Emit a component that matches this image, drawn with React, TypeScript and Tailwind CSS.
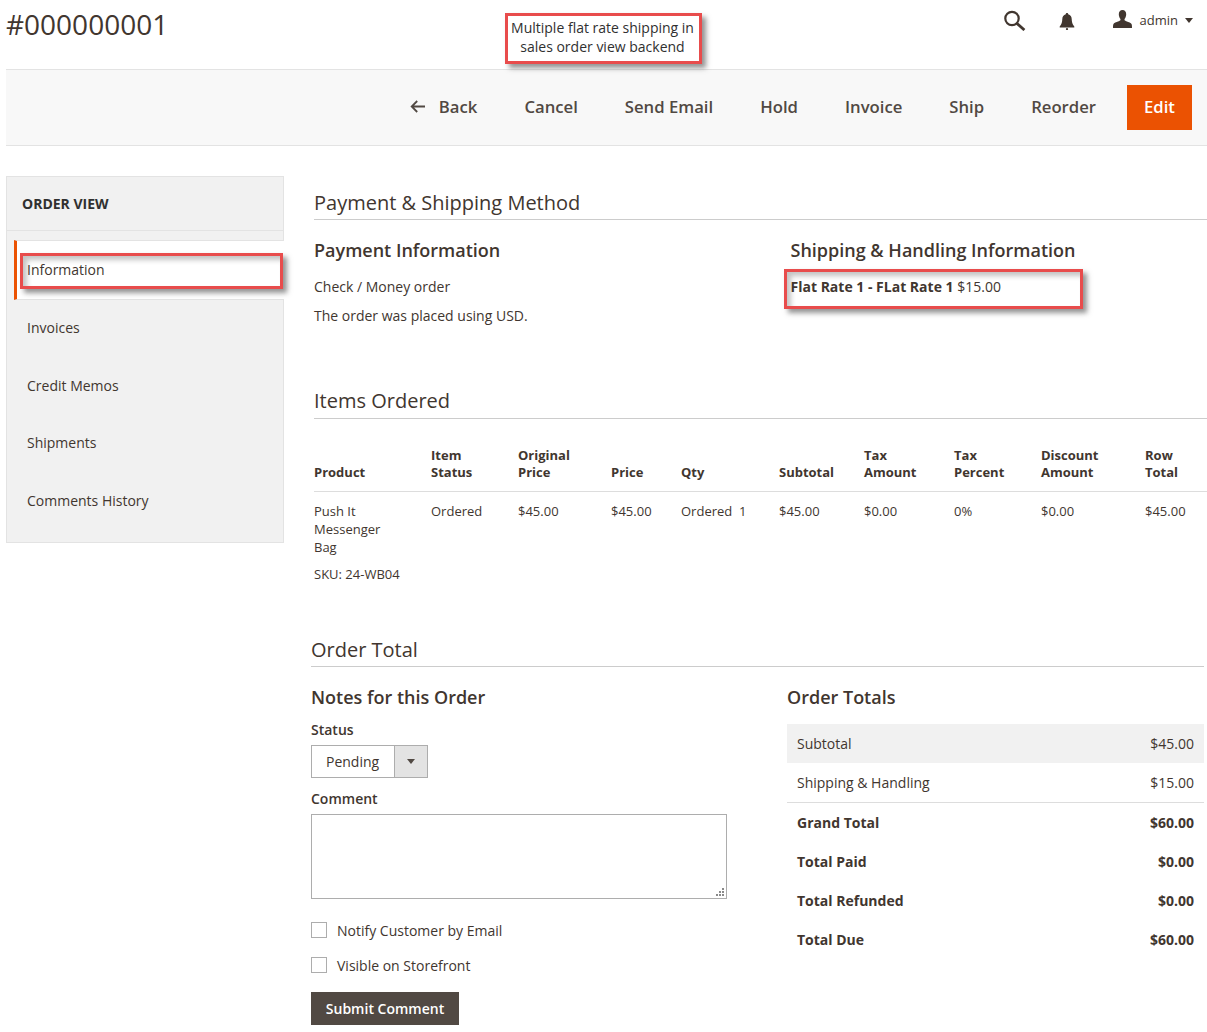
const actions = ['Cancel', 'Send Email', 'Hold', 'Invoice', 'Ship', 'Reorder'];

const navItems = ['Invoices', 'Credit Memos', 'Shipments', 'Comments History'];

const columns = [
  { label: ['Product'], width: 'w-[117px]' },
  { label: ['Item', 'Status'], width: 'w-[87px]' },
  { label: ['Original', 'Price'], width: 'w-[93px]' },
  { label: ['Price'], width: 'w-[70px]' },
  { label: ['Qty'], width: 'w-[98px]' },
  { label: ['Subtotal'], width: 'w-[85px]' },
  { label: ['Tax', 'Amount'], width: 'w-[90px]' },
  { label: ['Tax', 'Percent'], width: 'w-[87px]' },
  { label: ['Discount', 'Amount'], width: 'w-[104px]' },
  { label: ['Row', 'Total'], width: 'w-[62px]' },
];

const cells = ['Ordered', '$45.00', '$45.00', 'Ordered  1', '$45.00', '$0.00', '0%', '$0.00', '$45.00'];

const totals = [
  { label: 'Grand Total', value: '$60.00' },
  { label: 'Total Paid', value: '$0.00' },
  { label: 'Total Refunded', value: '$0.00' },
  { label: 'Total Due', value: '$60.00' },
];

const SearchIcon = () => (
  <svg width="22" height="22" viewBox="0 0 22 22" fill="none" stroke="currentColor" className="shrink-0">
    <circle cx="8" cy="9.5" r="6.7" strokeWidth="2.2" />
    <path d="M12.8 14.4 20.4 21" strokeWidth="2.8" />
  </svg>
);

const BellIcon = () => (
  <svg width="16" height="17" viewBox="0 0 16 17" fill="currentColor" className="mt-[3px] ml-[33px] shrink-0">
    <path d="M8 0c.8 0 1.2.5 1.2 1.2 2.3.6 3.4 2.4 3.5 4.8.1 3 .6 5.2 2.6 7.5v1H.7v-1C2.700 11.200 3.200 9 3.300 6c.1-2.400 1.200-4.200 3.500-4.800C6.800.5 7.200 0 8 0z" />
    <circle cx="8" cy="16" r="1.100" />
  </svg>
);

const UserIcon = () => (
  <svg width="19" height="18" viewBox="0 0 19 18" fill="currentColor" className="mb-[2px] ml-[38px] shrink-0">
    <path d="M9.500 0c2.400 0 3.700 1.700 3.700 4.200 0 1.800-.7 3.500-1.500 4.500-.3.400-.3 1.400.2 1.900.9.900 5.300 1.700 6.600 3.400.5.700.5 2.400.5 4H0c0-1.600 0-3.300.5-4 1.300-1.700 5.700-2.500 6.600-3.400.5-.5.500-1.500.2-1.900-.8-1-1.500-2.700-1.500-4.500C5.800 1.700 7.100 0 9.500 0z" />
  </svg>
);

const BackArrow = () => (
  <svg width="15" height="13" viewBox="0 0 15 13" fill="none" stroke="currentColor" strokeWidth="1.800" className="shrink-0">
    <path d="M15 6.500H2M7.200 1 1.700 6.500l5.500 5.500" />
  </svg>
);

const ResizeDots = () => (
  <svg width="8" height="8" viewBox="0 0 8 8" fill="#8a8a8a" className="absolute bottom-[3px] right-[3px]">
    <rect x="6" y="0" width="2" height="2" />
    <rect x="3" y="3" width="2" height="2" />
    <rect x="6" y="3" width="2" height="2" />
    <rect x="0" y="6" width="2" height="2" />
    <rect x="3" y="6" width="2" height="2" />
    <rect x="6" y="6" width="2" height="2" />
  </svg>
);

const Callout = ({ className, children }: { className: string; children?: React.ReactNode }) => (
  <div
    className={`absolute border-[3px] border-[#e84c4c] shadow-[4px_4px_5px_rgba(60,60,60,0.55),inset_4px_4px_5px_rgba(60,60,60,0.3)] ${className}`}
  >
    {children}
  </div>
);

const SectionTitle = ({ title, className }: { title: string; className: string }) => (
  <h2 className={`border-b border-[#cccccc] text-[20px] leading-[28px] text-[#41362f] ${className}`}>
    {title}
  </h2>
);

const Checkbox = ({ label }: { label: string }) => (
  <label className="flex h-[35px] items-center gap-[10px] text-[14px]">
    <span className="h-4 w-4 border border-[#adadad] bg-white" />
    {label}
  </label>
);

export default function App() {
  return (
    <div
      className="relative h-[1032px] w-[1207px] overflow-hidden bg-white pl-[6px] text-[14px] text-[#41362f]"
      style={{ fontFamily: '"Open Sans", sans-serif' }}
    >
      <header className="flex h-[70px] items-start justify-between border-b border-[#e3e3e3]">
        <h1 className="mt-[5px] text-[28px] leading-[38px] text-[#41362f]">#000000001</h1>
        <div className="mt-[9px] flex items-center text-[#41362f]">
          <SearchIcon />
          <BellIcon />
          <UserIcon />
          <span className="ml-[8px] pt-[1px] text-[13px]">admin</span>
          <span className="ml-[7px] mr-[14px] h-0 w-0 border-x-[4px] border-t-[5px] border-x-transparent border-t-[#41362f]" />
        </div>
      </header>

      <Callout className="left-[505px] top-[13px] flex h-[51px] w-[197px] items-center justify-center pb-[3px] pr-[2px] text-center text-[14px] leading-[19px] text-[#303030] shadow-[4px_4px_5px_rgba(60,60,60,0.55)]">
        <p>
          Multiple flat rate shipping in
          <br />
          sales order view backend
        </p>
      </Callout>

      <div className="flex h-[76px] items-center justify-end gap-[47px] border-b border-[#e3e3e3] bg-[#f8f8f8] pr-[15px] text-[16.7px] font-semibold text-[#514943]">
        <button type="button" className="flex items-center gap-[14px] pb-[1px]">
          <BackArrow />
          Back
        </button>
        {actions.map((action) => (
          <button key={action} type="button" className="pb-[1px]">
            {action}
          </button>
        ))}
        <button
          type="button"
          className="-ml-[16px] h-[45px] w-[65px] bg-[#eb5202] pb-[1px] text-white"
        >
          Edit
        </button>
      </div>

      <div className="mt-[30px] flex">
        <aside className="h-[367px] w-[278px] shrink-0 border border-[#e3e3e3] bg-[#f1f1f1]">
          <div className="flex h-[54px] items-center border-b border-[#e3e3e3] pl-[15px] text-[14px] font-bold text-[#303030]">
            ORDER VIEW
          </div>
          <div className="mt-[9px] ml-[7px] -mr-px flex h-[60px] items-center border-y border-[#e3e3e3] border-l-[3px] border-l-[#eb5202] bg-white pb-[2px] pl-[10px]">
            Information
          </div>
          <div className="-mt-[1px]">
            {navItems.map((item) => (
              <div key={item} className="flex h-[57.6px] items-center pl-[20px]">
                {item}
              </div>
            ))}
          </div>
        </aside>

        <main className="ml-[30px] w-[893px]">
          <section>
            <SectionTitle title="Payment & Shipping Method" className="mt-[13px] h-[31px]" />
            <div className="flex">
              <div className="w-[476.5px]">
                <h3 className="mt-[16px] text-[18px] font-semibold leading-[28px]">Payment Information</h3>
                <p className="mt-[13px] leading-[20px]">Check / Money order</p>
                <p className="mt-[9px] leading-[20px]">The order was placed using USD.</p>
              </div>
              <div>
                <h3 className="mt-[16px] text-[18px] font-semibold leading-[28px]">
                  Shipping &amp; Handling Information
                </h3>
                <p className="mt-[13px] leading-[20px]">
                  <strong className="font-bold">Flat Rate 1 - FLat Rate 1</strong> $15.00
                </p>
              </div>
            </div>
          </section>

          <section>
            <SectionTitle title="Items Ordered" className="mt-[61px] h-[32px]" />
            <table className="w-full table-fixed border-collapse text-[13px]">
              <thead>
                <tr className="h-[72px] border-b border-[#dddddd] align-bottom">
                  {columns.map((col) => (
                    <th key={col.label.join()} className={`pb-[10px] text-left font-bold leading-[17px] ${col.width}`}>
                      {col.label.map((line) => (
                        <div key={line}>{line}</div>
                      ))}
                    </th>
                  ))}
                </tr>
              </thead>
              <tbody>
                <tr className="align-top leading-[18px]">
                  <td className="pt-[10px]">
                    Push It
                    <br />
                    Messenger
                    <br />
                    Bag
                    <div className="mt-[9px]">SKU: 24-WB04</div>
                  </td>
                  {cells.map((cell, i) => (
                    <td key={i} className="whitespace-pre pt-[10px]">
                      {cell}
                    </td>
                  ))}
                </tr>
              </tbody>
            </table>
          </section>

          <section className="-ml-[3px] w-[893px]">
            <SectionTitle title="Order Total" className="mt-[53px] h-[31px]" />
            <div className="flex">
              <div className="w-[476px]">
                <h3 className="mt-[16px] text-[18px] font-semibold leading-[28px]">Notes for this Order</h3>
                <div className="mt-[9px] font-semibold leading-[20px]">Status</div>
                <div className="mt-[5px] flex h-[33px] w-[117px] border border-[#adadad] bg-white">
                  <span className="flex w-[82px] items-center pl-[14px]">Pending</span>
                  <span className="flex flex-1 items-center justify-center border-l border-[#adadad] bg-[#e3e3e3]">
                    <span className="h-0 w-0 border-x-[4px] border-t-[5px] border-x-transparent border-t-[#514943]" />
                  </span>
                </div>
                <div className="mt-[11px] font-semibold leading-[20px]">Comment</div>
                <div className="relative mt-[5px] h-[85px] w-[416px]">
                  <textarea className="block h-full w-full resize-none border border-[#adadad] bg-white" />
                  <ResizeDots />
                </div>
                <div className="mt-[14px]">
                  <Checkbox label="Notify Customer by Email" />
                  <Checkbox label="Visible on Storefront" />
                </div>
                <button
                  type="button"
                  className="mt-[9px] h-[33px] w-[148px] bg-[#514943] text-[14px] font-semibold text-white"
                >
                  Submit Comment
                </button>
              </div>
              <div className="flex-1">
                <h3 className="mt-[16px] text-[18px] font-semibold leading-[28px]">Order Totals</h3>
                <div className="mt-[13px] flex h-[39px] items-center justify-between bg-[#f1f1f1] px-[10px]">
                  <span>Subtotal</span>
                  <span>$45.00</span>
                </div>
                <div className="flex h-[40px] items-center justify-between border-b border-[#dddddd] px-[10px]">
                  <span>Shipping &amp; Handling</span>
                  <span>$15.00</span>
                </div>
                {totals.map((row) => (
                  <div key={row.label} className="flex h-[39px] items-center justify-between px-[10px] font-bold">
                    <span>{row.label}</span>
                    <span>{row.value}</span>
                  </div>
                ))}
              </div>
            </div>
          </section>
        </main>
      </div>

      <Callout className="left-[20px] top-[253px] h-[36px] w-[263px]" />
      <Callout className="left-[784px] top-[269px] h-[40px] w-[299px]" />
    </div>
  );
}
